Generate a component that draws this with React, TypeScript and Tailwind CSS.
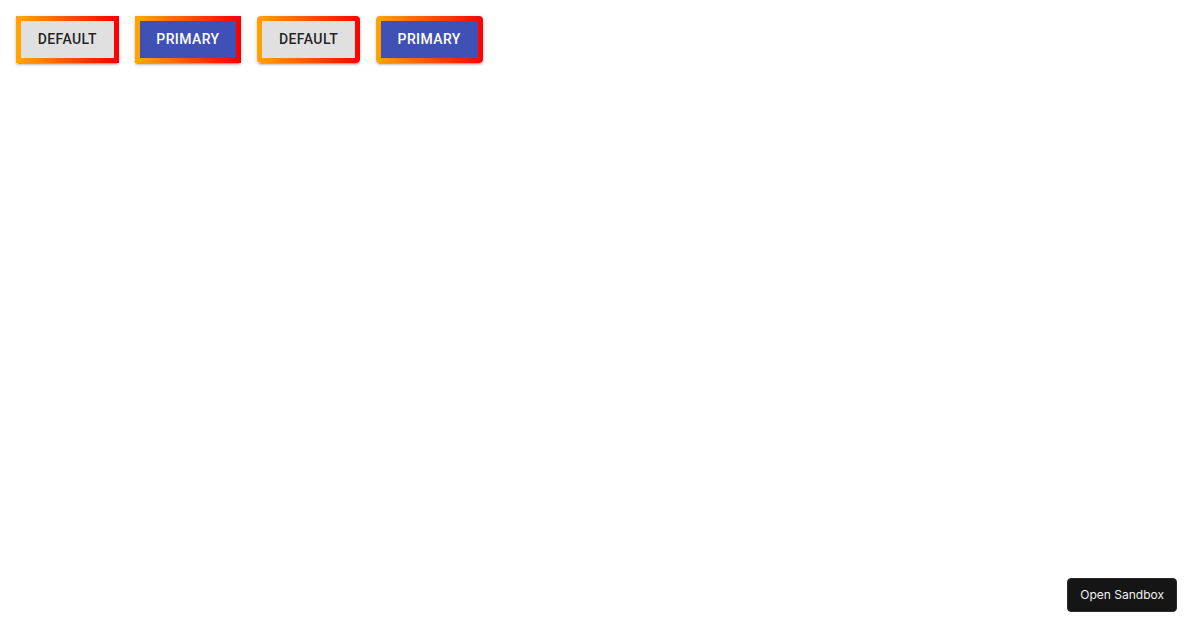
const shadow =
  "shadow-[0_3px_1px_-2px_rgba(0,0,0,0.2),0_2px_2px_0_rgba(0,0,0,0.14),0_1px_5px_0_rgba(0,0,0,0.12)]";

const base =
  "font-['Roboto',sans-serif] font-medium text-sm uppercase tracking-[0.02857em] leading-[1.75] px-[16.75px] py-1.5 min-w-16 border-[5px] cursor-pointer";

function SquareButton({ primary, children }: { primary?: boolean; children: string }) {
  return (
    <button
      className={
        base +
        " " +
        shadow +
        " [border-image:linear-gradient(to_right,orange,red)_1] " +
        (primary ? "bg-[#3f51b5] text-white" : "bg-[#e0e0e0] text-[rgba(0,0,0,0.87)]")
      }
    >
      {children}
    </button>
  );
}

function RoundButton({ primary, children }: { primary?: boolean; children: string }) {
  return (
    <button
      className={
        base +
        " " +
        shadow +
        " rounded border-transparent " +
        (primary
          ? "text-white [background:linear-gradient(#3f51b5,#3f51b5)_padding-box,linear-gradient(to_right,orange,red)_border-box]"
          : "text-[rgba(0,0,0,0.87)] [background:linear-gradient(#e0e0e0,#e0e0e0)_padding-box,linear-gradient(to_right,orange,red)_border-box]")
      }
    >
      {children}
    </button>
  );
}

export default function App() {
  return (
    <div className="min-h-screen bg-white p-2">
      <div className="flex items-start gap-4 p-2">
        <SquareButton>Default</SquareButton>
        <SquareButton primary>Primary</SquareButton>
        <RoundButton>Default</RoundButton>
        <RoundButton primary>Primary</RoundButton>
      </div>
      <button className="fixed bottom-[18px] right-[23px] h-[34px] px-3 rounded border border-[#2a2a2a] bg-[#151515] text-[12px] text-[#f2f2f2] font-['Inter',sans-serif]">
        Open Sandbox
      </button>
    </div>
  );
}
